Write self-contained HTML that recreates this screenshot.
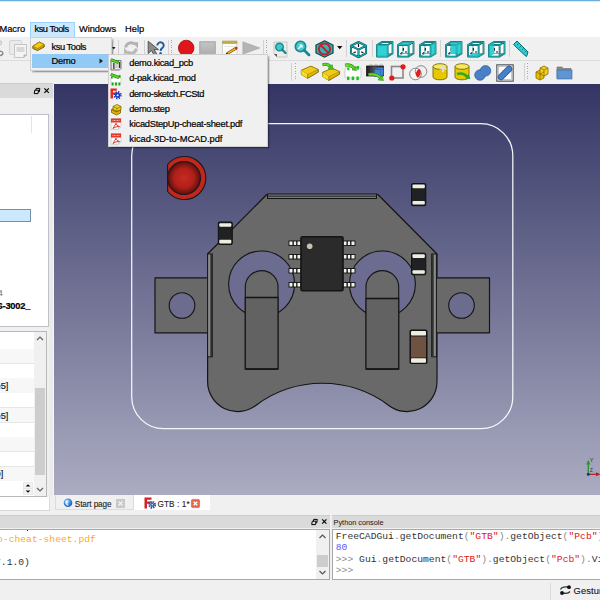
<!DOCTYPE html>
<html><head><meta charset="utf-8">
<style>
*{margin:0;padding:0;box-sizing:border-box}
html,body{width:600px;height:600px;overflow:hidden;background:#f0f0f0;font-family:"Liberation Sans",sans-serif;color:#000}
.a{position:absolute}
.t{position:absolute;white-space:nowrap;-webkit-text-stroke:0.2px currentColor}
svg{overflow:visible}
.m{-webkit-text-stroke:0}
</style></head><body>
<div class="a" style="left:0px;top:0px;width:600px;height:37px;background:#fff;"></div>
<div class="a" style="left:0px;top:0px;width:600px;height:1px;background:#6aafe0;"></div>
<div class="a" style="left:0px;top:1px;width:600px;height:1px;background:#dbeaf6;"></div>
<div class="a" style="left:29.5px;top:22px;width:45px;height:15px;background:#cce8ff;border:1px solid #99d1ff;border-bottom:none"></div>
<div class="t" style="left:-0.5px;top:25.45px;font-size:9.3px;line-height:9.3px;color:#000;letter-spacing:-0.05px;font-weight:normal;font-family:'Liberation Sans',sans-serif;">Macro</div>
<div class="t" style="left:34.5px;top:25.45px;font-size:9.3px;line-height:9.3px;color:#000;letter-spacing:-0.5px;font-weight:normal;font-family:'Liberation Sans',sans-serif;">ksu Tools</div>
<div class="t" style="left:79px;top:25.45px;font-size:9.3px;line-height:9.3px;color:#000;letter-spacing:-0.1px;font-weight:normal;font-family:'Liberation Sans',sans-serif;">Windows</div>
<div class="t" style="left:125px;top:25.45px;font-size:9.3px;line-height:9.3px;color:#000;letter-spacing:0px;font-weight:normal;font-family:'Liberation Sans',sans-serif;">Help</div>
<div class="a" style="left:0px;top:60px;width:600px;height:1px;background:#dcdcdc;"></div>
<div class="a" style="left:117.5px;top:40px;width:1px;height:17px;background:#d2d2d2;"></div>
<div class="a" style="left:143.5px;top:40px;width:1px;height:17px;background:#d2d2d2;"></div>
<div class="a" style="left:167.5px;top:40px;width:1px;height:17px;background:#d2d2d2;"></div>
<div class="a" style="left:262.5px;top:40px;width:1px;height:17px;background:#d2d2d2;"></div>
<div class="a" style="left:346px;top:40px;width:1px;height:17px;background:#d2d2d2;"></div>
<div class="a" style="left:372px;top:40px;width:1px;height:17px;background:#d2d2d2;"></div>
<div class="a" style="left:440px;top:40px;width:1px;height:17px;background:#d2d2d2;"></div>
<div class="a" style="left:509px;top:40px;width:1px;height:17px;background:#d2d2d2;"></div>
<div class="a" style="left:171px;top:40px;width:1px;height:17px;background:repeating-linear-gradient(#a8a8a8 0 1px,transparent 1px 2.5px)"></div>
<div class="a" style="left:266px;top:40px;width:1px;height:17px;background:repeating-linear-gradient(#a8a8a8 0 1px,transparent 1px 2.5px)"></div>
<div class="a" style="left:291.3px;top:63px;width:1px;height:18px;background:#d2d2d2;"></div>
<div class="a" style="left:295px;top:63px;width:1px;height:18px;background:repeating-linear-gradient(#a8a8a8 0 1px,transparent 1px 2.5px)"></div>
<div class="a" style="left:524px;top:63px;width:1px;height:18px;background:#d2d2d2;"></div>
<div class="a" style="left:527px;top:63px;width:1px;height:18px;background:repeating-linear-gradient(#a8a8a8 0 1px,transparent 1px 2.5px)"></div>
<svg class="a" style="left:350px;top:40.5px" width="17" height="17" viewBox="0 0 17 17"><path d="M8.5 1L16 4.8V12.4L8.5 16.2L1 12.4V4.8Z" fill="#fff"/><path d="M8.5 2.5V6 M3.5 12L5.8 10.8 M13.5 12L11.2 10.8" stroke="#111" stroke-width="1.2"/><g fill="none" stroke-linejoin="round"><path d="M8.5 1L16 4.8V12.4L8.5 16.2L1 12.4V4.8Z M1 4.8L8.5 8.6L16 4.8 M8.5 8.6V16.2" stroke="#0d6569" stroke-width="2.1"/><path d="M8.5 1L16 4.8V12.4L8.5 16.2L1 12.4V4.8Z M1 4.8L8.5 8.6L16 4.8 M8.5 8.6V16.2" stroke="#1fa9ad" stroke-width="1"/></g></svg>
<svg class="a" style="left:375.5px;top:40.6px" width="18" height="17" viewBox="0 0 18 17"><path d="M1.0,4.0L5.9,1.0L16.5,1.0L16.5,12.6L11.6,15.6L1.0,15.6Z" fill="#fff"/><path d="M5.9,1.0L5.9,12.6L16.5,12.6 M1.0,15.6L5.9,12.6" fill="none" stroke="#1fa9ad" stroke-width="1" opacity="0.8"/><path d="M6.3 7V9.8 M3.4 12.8L5.3 11.5 M8 11H10" stroke="#111" stroke-width="1.1"/><polygon points="1.0,4.0 11.6,4.0 11.6,15.6 1.0,15.6" fill="#2fd3d6"/><path d="M1.0,4.0L5.9,1.0L16.5,1.0L16.5,12.6L11.6,15.6L1.0,15.6Z M1.0,4.0L11.6,4.0L11.6,15.6 M11.6,4.0L16.5,1.0" fill="none" stroke="#0d6569" stroke-width="1.8" stroke-linejoin="round"/><path d="M1.0,4.0L5.9,1.0L16.5,1.0L16.5,12.6L11.6,15.6L1.0,15.6Z M1.0,4.0L11.6,4.0L11.6,15.6 M11.6,4.0L16.5,1.0" fill="none" stroke="#1fa9ad" stroke-width="0.9" stroke-linejoin="round"/><polygon points="1.0,4.0 11.6,4.0 11.6,15.6 1.0,15.6" fill="#2fd3d6" opacity="0.55"/></svg>
<svg class="a" style="left:397px;top:40.6px" width="18" height="17" viewBox="0 0 18 17"><path d="M1.0,4.0L5.9,1.0L16.5,1.0L16.5,12.6L11.6,15.6L1.0,15.6Z" fill="#fff"/><path d="M5.9,1.0L5.9,12.6L16.5,12.6 M1.0,15.6L5.9,12.6" fill="none" stroke="#1fa9ad" stroke-width="1" opacity="0.8"/><path d="M6.3 7V9.8 M3.4 12.8L5.3 11.5 M8 11H10" stroke="#111" stroke-width="1.1"/><polygon points="1.0,4.0 5.9,1.0 16.5,1.0 11.6,4.0" fill="#2fd3d6"/><path d="M1.0,4.0L5.9,1.0L16.5,1.0L16.5,12.6L11.6,15.6L1.0,15.6Z M1.0,4.0L11.6,4.0L11.6,15.6 M11.6,4.0L16.5,1.0" fill="none" stroke="#0d6569" stroke-width="1.8" stroke-linejoin="round"/><path d="M1.0,4.0L5.9,1.0L16.5,1.0L16.5,12.6L11.6,15.6L1.0,15.6Z M1.0,4.0L11.6,4.0L11.6,15.6 M11.6,4.0L16.5,1.0" fill="none" stroke="#1fa9ad" stroke-width="0.9" stroke-linejoin="round"/><polygon points="1.0,4.0 5.9,1.0 16.5,1.0 11.6,4.0" fill="#2fd3d6" opacity="0.55"/></svg>
<svg class="a" style="left:419.2px;top:40.6px" width="18" height="17" viewBox="0 0 18 17"><path d="M1.0,4.0L5.9,1.0L16.5,1.0L16.5,12.6L11.6,15.6L1.0,15.6Z" fill="#fff"/><path d="M5.9,1.0L5.9,12.6L16.5,12.6 M1.0,15.6L5.9,12.6" fill="none" stroke="#1fa9ad" stroke-width="1" opacity="0.8"/><path d="M6.3 7V9.8 M3.4 12.8L5.3 11.5 M8 11H10" stroke="#111" stroke-width="1.1"/><polygon points="11.6,4.0 16.5,1.0 16.5,12.6 11.6,15.6" fill="#2fd3d6"/><path d="M1.0,4.0L5.9,1.0L16.5,1.0L16.5,12.6L11.6,15.6L1.0,15.6Z M1.0,4.0L11.6,4.0L11.6,15.6 M11.6,4.0L16.5,1.0" fill="none" stroke="#0d6569" stroke-width="1.8" stroke-linejoin="round"/><path d="M1.0,4.0L5.9,1.0L16.5,1.0L16.5,12.6L11.6,15.6L1.0,15.6Z M1.0,4.0L11.6,4.0L11.6,15.6 M11.6,4.0L16.5,1.0" fill="none" stroke="#1fa9ad" stroke-width="0.9" stroke-linejoin="round"/><polygon points="11.6,4.0 16.5,1.0 16.5,12.6 11.6,15.6" fill="#2fd3d6" opacity="0.55"/></svg>
<svg class="a" style="left:445px;top:40.6px" width="18" height="17" viewBox="0 0 18 17"><path d="M1.0,4.0L5.9,1.0L16.5,1.0L16.5,12.6L11.6,15.6L1.0,15.6Z" fill="#fff"/><path d="M5.9,1.0L5.9,12.6L16.5,12.6 M1.0,15.6L5.9,12.6" fill="none" stroke="#1fa9ad" stroke-width="1" opacity="0.8"/><path d="M6.3 7V9.8 M3.4 12.8L5.3 11.5 M8 11H10" stroke="#111" stroke-width="1.1"/><polygon points="5.9,1.0 16.5,1.0 16.5,12.6 5.9,12.6" fill="#2fd3d6"/><path d="M1.0,4.0L5.9,1.0L16.5,1.0L16.5,12.6L11.6,15.6L1.0,15.6Z M1.0,4.0L11.6,4.0L11.6,15.6 M11.6,4.0L16.5,1.0" fill="none" stroke="#0d6569" stroke-width="1.8" stroke-linejoin="round"/><path d="M1.0,4.0L5.9,1.0L16.5,1.0L16.5,12.6L11.6,15.6L1.0,15.6Z M1.0,4.0L11.6,4.0L11.6,15.6 M11.6,4.0L16.5,1.0" fill="none" stroke="#1fa9ad" stroke-width="0.9" stroke-linejoin="round"/><polygon points="5.9,1.0 16.5,1.0 16.5,12.6 5.9,12.6" fill="#2fd3d6" opacity="0.55"/></svg>
<svg class="a" style="left:466.5px;top:40.6px" width="18" height="17" viewBox="0 0 18 17"><path d="M1.0,4.0L5.9,1.0L16.5,1.0L16.5,12.6L11.6,15.6L1.0,15.6Z" fill="#fff"/><path d="M5.9,1.0L5.9,12.6L16.5,12.6 M1.0,15.6L5.9,12.6" fill="none" stroke="#1fa9ad" stroke-width="1" opacity="0.8"/><path d="M6.3 7V9.8 M3.4 12.8L5.3 11.5 M8 11H10" stroke="#111" stroke-width="1.1"/><polygon points="1.0,15.6 5.9,12.6 16.5,12.6 11.6,15.6" fill="#2fd3d6"/><path d="M1.0,4.0L5.9,1.0L16.5,1.0L16.5,12.6L11.6,15.6L1.0,15.6Z M1.0,4.0L11.6,4.0L11.6,15.6 M11.6,4.0L16.5,1.0" fill="none" stroke="#0d6569" stroke-width="1.8" stroke-linejoin="round"/><path d="M1.0,4.0L5.9,1.0L16.5,1.0L16.5,12.6L11.6,15.6L1.0,15.6Z M1.0,4.0L11.6,4.0L11.6,15.6 M11.6,4.0L16.5,1.0" fill="none" stroke="#1fa9ad" stroke-width="0.9" stroke-linejoin="round"/><polygon points="1.0,15.6 5.9,12.6 16.5,12.6 11.6,15.6" fill="#2fd3d6" opacity="0.55"/></svg>
<svg class="a" style="left:488px;top:40.6px" width="18" height="17" viewBox="0 0 18 17"><path d="M1.0,4.0L5.9,1.0L16.5,1.0L16.5,12.6L11.6,15.6L1.0,15.6Z" fill="#fff"/><path d="M5.9,1.0L5.9,12.6L16.5,12.6 M1.0,15.6L5.9,12.6" fill="none" stroke="#1fa9ad" stroke-width="1" opacity="0.8"/><path d="M6.3 7V9.8 M3.4 12.8L5.3 11.5 M8 11H10" stroke="#111" stroke-width="1.1"/><polygon points="1.0,4.0 5.9,1.0 5.9,12.6 1.0,15.6" fill="#2fd3d6"/><path d="M1.0,4.0L5.9,1.0L16.5,1.0L16.5,12.6L11.6,15.6L1.0,15.6Z M1.0,4.0L11.6,4.0L11.6,15.6 M11.6,4.0L16.5,1.0" fill="none" stroke="#0d6569" stroke-width="1.8" stroke-linejoin="round"/><path d="M1.0,4.0L5.9,1.0L16.5,1.0L16.5,12.6L11.6,15.6L1.0,15.6Z M1.0,4.0L11.6,4.0L11.6,15.6 M11.6,4.0L16.5,1.0" fill="none" stroke="#1fa9ad" stroke-width="0.9" stroke-linejoin="round"/><polygon points="1.0,4.0 5.9,1.0 5.9,12.6 1.0,15.6" fill="#2fd3d6" opacity="0.55"/></svg>
<svg class="a" style="left:512px;top:40px" width="17" height="17" viewBox="0 0 17 17"><path d="M1.5 4.5L5 1L16 12L14.5 16.5L12.5 15Z" fill="#2ccfd2" stroke="#0d6569" stroke-width="1"/><path d="M5 5L6.3 3.7M7.5 7.5L8.8 6.2M10 10L11.3 8.7M12.5 12.5L13.8 11.2" stroke="#0d6569" stroke-width="0.8"/></svg>
<svg class="a" style="left:0px;top:40px" width="8" height="17" viewBox="0 0 8 17"><circle cx="-0.5" cy="2.8" r="2" fill="none" stroke="#c4c4c4" stroke-width="1.2"/><path d="M-1 15.5C1.5 15.8 3.2 14.5 2.8 12.8C2.4 11.2 0.5 11 -1 11.5" fill="none" stroke="#8a8a8a" stroke-width="1.5"/></svg>
<svg class="a" style="left:9px;top:40px" width="19" height="18" viewBox="0 0 19 18"><rect x="0.5" y="0.5" width="12" height="14" rx="1.5" fill="#eaeaea" stroke="#d4d4d4"/><path d="M5.5 4.5H17.5V15L15 17.5H5.5Z" fill="#f4f4f4" stroke="#c4c4c4"/><rect x="7.5" y="7" width="8" height="5" fill="#d8d8d8"/><path d="M15 17.5V15H17.5" fill="#ccc" stroke="#aaa" stroke-width="0.8"/></svg>
<svg class="a" style="left:111.5px;top:47px" width="4" height="4" viewBox="0 0 4 4"><path d="M0 0H3.5L1.75 2.6Z" fill="#222"/></svg>
<svg class="a" style="left:122.5px;top:40.5px" width="16" height="14" viewBox="0 0 16 14"><path d="M2.6 6.5A5.4 5.4 0 0 1 11.6 3.2" fill="none" stroke="#b2b2b2" stroke-width="2.8"/><path d="M9 1.2H15V7.2Z" fill="#b2b2b2"/><path d="M13.4 7.5A5.4 5.4 0 0 1 4.4 10.8" fill="none" stroke="#b8b8b8" stroke-width="2.8"/><path d="M7 12.8H1V6.8Z" fill="#b8b8b8"/></svg>
<svg class="a" style="left:146.5px;top:39.5px" width="19" height="18" viewBox="0 0 19 18"><path d="M1.2 1.2L1.2 13.5L4.5 10.5L7.6 16L10 14.6L7.2 9.6H11.5Z" fill="#8c8c8c" stroke="#4a4a4a" stroke-width="0.9" stroke-linejoin="round"/><path d="M10.3 5.5A3.2 3.2 0 1 1 15.2 8.2C14 9 13.6 9.6 13.6 11" fill="none" stroke="#2a5c9c" stroke-width="2"/><circle cx="13.6" cy="13.2" r="1.2" fill="#2a5c9c"/></svg>
<svg class="a" style="left:176.5px;top:39.5px" width="19" height="16" viewBox="0 0 19 16"><circle cx="9.2" cy="8" r="8.6" fill="#fff" opacity="0.9"/><circle cx="9.2" cy="8" r="7.8" fill="#e0161a" stroke="#a00c10" stroke-width="0.8"/></svg>
<svg class="a" style="left:198.5px;top:40.5px" width="17" height="15" viewBox="0 0 17 15"><defs><linearGradient id="gsq" x1="0" y1="0" x2="0" y2="1"><stop offset="0" stop-color="#c4c4c4"/><stop offset="1" stop-color="#acacac"/></linearGradient></defs><rect x="0.8" y="0.8" width="15.4" height="13.6" fill="url(#gsq)" stroke="#a0a0a0"/></svg>
<svg class="a" style="left:220.5px;top:39.5px" width="18" height="17" viewBox="0 0 18 17"><rect x="1.5" y="2" width="14.5" height="14" fill="#fbfbf8" stroke="#c4c4c4" stroke-width="0.7"/><rect x="1.5" y="1" width="14.5" height="2.6" fill="#d4bc50" stroke="#a89030" stroke-width="0.5"/><path d="M2.5 2.2H15" stroke="#8a7420" stroke-width="0.6" stroke-dasharray="0.8 0.7"/><path d="M3.5 6.5H13.5" stroke="#d8d8d8" stroke-width="0.6"/><path d="M6.2 13.6L15 8.2" stroke="#6a4a10" stroke-width="2.8" stroke-linecap="round"/><path d="M6.2 13.6L15 8.2" stroke="#f0b030" stroke-width="1.7"/><circle cx="15.2" cy="8" r="1.2" fill="#e02020"/><path d="M5 14.5L6.6 13.4" stroke="#222" stroke-width="1"/></svg>
<svg class="a" style="left:241.5px;top:40.5px" width="19" height="14" viewBox="0 0 19 14"><path d="M0.8 0.8L18 7L0.8 13.2Z" fill="#b4b4b4" stroke="#a8a8a8" stroke-width="0.6"/></svg>
<svg class="a" style="left:272.5px;top:40.5px" width="15" height="17" viewBox="0 0 15 17"><path d="M1 1H14V16H4L1 13Z" fill="#ececec" stroke="#c8c8c8"/><path d="M1 13L4 16V13Z" fill="#555"/><circle cx="6.5" cy="6" r="3.8" fill="#43c8cc" stroke="#168a90" stroke-width="1.4"/><path d="M9 8.5L12.5 12" stroke="#168a90" stroke-width="2.4" stroke-linecap="round"/></svg>
<svg class="a" style="left:293.5px;top:40px" width="17" height="17" viewBox="0 0 17 17"><circle cx="6.5" cy="6.5" r="5.2" fill="#43c8cc" stroke="#168a90" stroke-width="1.6"/><path d="M10.3 10.3L15 15" stroke="#168a90" stroke-width="2.8" stroke-linecap="round"/><path d="M4 9L8 5M8 5H5.3M8 5V7.7" stroke="#fff" stroke-width="1.2"/></svg>
<svg class="a" style="left:314.5px;top:39.5px" width="19" height="18" viewBox="0 0 19 18"><path d="M9.5 0.8L18 5V13L9.5 17.2L1 13V5Z" fill="#2bb8bd" stroke="#0f3f44" stroke-width="1.2"/><circle cx="9.5" cy="9" r="5.6" fill="none" stroke="#c81e24" stroke-width="2"/><path d="M5.6 5.1L13.4 12.9" stroke="#c81e24" stroke-width="2"/></svg>
<svg class="a" style="left:336.5px;top:46px" width="6" height="4" viewBox="0 0 6 4"><path d="M0 0H5.5L2.75 3.2Z" fill="#111"/></svg>
<svg class="a" style="left:298px;top:60px" width="44" height="22" viewBox="0 0 44 22"><g transform="translate(3.3,6.2)"><path d="M0 4.1L9.6 0L17 3.4V5.9L6.3 12.2L0 8.1Z" fill="#e8b800" stroke="#6a5000" stroke-width="0.8" stroke-linejoin="round"/><path d="M0 4.1L9.6 0L17 3.4L6.3 8.4Z" fill="#f0cc18" stroke="#8a6a00" stroke-width="0.5"/><path d="M0 4.1L6.3 8.4V12.2L0 8.1Z" fill="#f8e020"/><path d="M6.3 8.4V12.2" stroke="#6a5000" stroke-width="0.6"/></g><g transform="translate(24.6,8.3)"><path d="M0 4.1L9.6 0L17 3.4V5.9L6.3 12.2L0 8.1Z" fill="#e8b800" stroke="#6a5000" stroke-width="0.8" stroke-linejoin="round"/><path d="M0 4.1L9.6 0L17 3.4L6.3 8.4Z" fill="#f0cc18" stroke="#8a6a00" stroke-width="0.5"/><path d="M0 4.1L6.3 8.4V12.2L0 8.1Z" fill="#f8e020"/><path d="M6.3 8.4V12.2" stroke="#6a5000" stroke-width="0.6"/></g><path d="M24.5 4.8C27.5 3.8 31 4.2 33 7.5" fill="none" stroke="#2a8a1a" stroke-width="3"/><path d="M24.5 4.8C27.5 3.8 31 4.2 33 7.5" fill="none" stroke="#5ad41e" stroke-width="1.8"/><path d="M30 8.6L35.2 9.6L34.2 4.6Z" fill="#4ac41a" stroke="#2a8a1a" stroke-width="0.5"/></svg>
<svg class="a" style="left:342px;top:60px" width="44" height="22" viewBox="0 0 44 22"><rect x="3" y="7.5" width="16" height="10.5" rx="2" fill="#fff" stroke="#b0b0b0" stroke-width="0.6"/><g fill="#18c818"><rect x="5" y="16.5" width="2.4" height="3.6"/><rect x="9.7" y="16.5" width="2.4" height="3.6"/><rect x="14.4" y="16.5" width="2.4" height="3.6"/><rect x="14.6" y="6" width="2.4" height="3.6"/><rect x="5.2" y="7.8" width="2.2" height="2.4"/></g><path d="M3 5.2C6.5 4.5 10 5.5 12.5 8.8" fill="none" stroke="#2a8a1a" stroke-width="3.2"/><path d="M3 5.2C6.5 4.5 10 5.5 12.5 8.8" fill="none" stroke="#62dc22" stroke-width="2"/><path d="M10 10L14.5 10.6L13.8 6.4Z" fill="#52cc1a" stroke="#2a8a1a" stroke-width="0.5"/><defs><linearGradient id="chipg" x1="0" y1="0" x2="1" y2="0"><stop offset="0" stop-color="#1a1a1a"/><stop offset="0.5" stop-color="#5a5a5a"/><stop offset="1" stop-color="#2a2a2a"/></linearGradient></defs><g fill="#f4f4f4" stroke="#9a9a9a" stroke-width="0.5"><path d="M27 6A1.8 1.8 0 0 1 30.6 6Z"/><path d="M32.2 6A1.8 1.8 0 0 1 35.8 6Z"/><path d="M37.4 6A1.8 1.8 0 0 1 41 6Z"/></g><rect x="24.5" y="6" width="17" height="10" fill="url(#chipg)" stroke="#111" stroke-width="0.7"/><path d="M32.5 9.5L35.5 7.5H41.5V15L38.5 16.5H32.5Z" fill="#3f86d8" stroke="#1f4f90" stroke-width="0.5"/><path d="M35.5 7.5V9.5H41.5M32.5 9.5H38.5V16.5" fill="none" stroke="#1f4f90" stroke-width="0.4"/><path d="M26.5 14.5C30 14 36 14.5 39 18.5" fill="none" stroke="#2a8a1a" stroke-width="3.2"/><path d="M26.5 14.5C30 14 36 14.5 39 18.5" fill="none" stroke="#62dc22" stroke-width="2"/><path d="M36 20L41.5 20.6L40.2 15.6Z" fill="#52cc1a" stroke="#2a8a1a" stroke-width="0.5"/></svg>
<svg class="a" style="left:388.5px;top:63.5px" width="17" height="17" viewBox="0 0 17 17"><rect x="2.5" y="2.5" width="11.5" height="11.5" fill="none" stroke="#8a8a8a" stroke-width="1.6"/><circle cx="14" cy="2.8" r="2.6" fill="#e01a1a"/><circle cx="2.8" cy="14" r="2.6" fill="#e01a1a"/></svg>
<svg class="a" style="left:408.5px;top:64.5px" width="19" height="16" viewBox="0 0 19 16"><circle cx="6.5" cy="9" r="5.8" fill="#f8f8f8" stroke="#7a7a7a" stroke-width="0.9"/><circle cx="12" cy="6.5" r="5.8" fill="none" stroke="#7a7a7a" stroke-width="0.9"/><path d="M10.5 3.7A5.8 5.8 0 0 1 8.2 12.8A5.8 5.8 0 0 1 10.5 3.7Z" fill="#e02020"/></svg>
<svg class="a" style="left:432px;top:63px" width="17" height="18" viewBox="0 0 17 18"><path d="M1 3.5V14A7 2.8 0 0 0 15 14V3.5Z" fill="#e8c800" stroke="#7a6a00" stroke-width="0.9"/><ellipse cx="8" cy="3.5" rx="7" ry="2.8" fill="#f8e860" stroke="#7a6a00" stroke-width="0.9"/><path d="M11 2V9M7.5 5.5H14.5" stroke="#dcdcdc" stroke-width="2"/></svg>
<svg class="a" style="left:454px;top:63px" width="17" height="18" viewBox="0 0 17 18"><path d="M1 3.5V14A7 2.8 0 0 0 15 14V3.5Z" fill="#e8c800" stroke="#7a6a00" stroke-width="0.9"/><ellipse cx="8" cy="3.5" rx="7" ry="2.8" fill="#f8e860" stroke="#7a6a00" stroke-width="0.9"/><path d="M3 11C7 10 11 11 13.5 14" fill="none" stroke="#2fa82a" stroke-width="2.6"/><path d="M11 15.5L16.5 16L14.5 11Z" fill="#2fa82a"/></svg>
<svg class="a" style="left:473.5px;top:64.5px" width="18" height="16" viewBox="0 0 18 16"><circle cx="6" cy="10" r="5.3" fill="#4a80c8" stroke="#2a5a98" stroke-width="0.7"/><circle cx="11.5" cy="5.8" r="5.3" fill="#4a80c8" stroke="#2a5a98" stroke-width="0.7"/><path d="M6 10L11.5 5.8" stroke="#4a80c8" stroke-width="6"/></svg>
<svg class="a" style="left:495.5px;top:63.5px" width="18" height="18" viewBox="0 0 18 18"><rect x="0.8" y="0.8" width="16.4" height="16.4" fill="#e8e8e8" stroke="#555" stroke-width="1.1"/><rect x="2.5" y="2.5" width="13" height="13" fill="#fff" stroke="#999" stroke-width="0.5"/><path d="M5 13L13 5" stroke="#2a5aa0" stroke-width="6.5" stroke-linecap="round"/><path d="M5 13L13 5" stroke="#4a80c8" stroke-width="4.6" stroke-linecap="round"/></svg>
<svg class="a" style="left:534.5px;top:64px" width="15" height="15" viewBox="0 0 15 15"><path d="M1 8L5 6L9 8V14L5 16L1 14Z" fill="#e6c000" stroke="#8a6a00" stroke-width="0.8"/><path d="M5 4L9 2L13 4V10L9 12L5 10Z" fill="#f2cf1a" stroke="#8a6a00" stroke-width="0.8"/><path d="M1 8L5 10L9 8M5 4L9 6L13 4M9 6V12M5 10V16" fill="none" stroke="#8a6a00" stroke-width="0.7"/></svg>
<svg class="a" style="left:555.5px;top:64.5px" width="17" height="15" viewBox="0 0 17 15"><path d="M1 2H6L7.5 3.5H15V13H1Z" fill="#8a8a8a" stroke="#6a6a6a" stroke-width="0.6"/><rect x="1" y="5" width="15" height="9" fill="#5f95d0" stroke="#3a6aa0" stroke-width="0.6"/></svg>
<div class="a" style="left:0px;top:83px;width:52.5px;height:1px;background:#cdcdcd;"></div>
<div class="a" style="left:0px;top:84px;width:52.5px;height:13.5px;background:#dadada;"></div>
<div class="a" style="left:52.5px;top:83px;width:1.5px;height:15px;background:#f0f0f0;"></div>
<svg class="a" style="left:33px;top:86px" width="18" height="10" viewBox="0 0 18 10"><path d="M1.8 4.2H5.6L5 7.6H1.2Z M2.9 4.2L3.2 2.4H6.8L6.3 5.8H5.4" fill="none" stroke="#000" stroke-width="1"/><path d="M11.4 2.4L15.8 6.8M15.8 2.4L11.4 6.8" stroke="#000" stroke-width="1.15"/></svg>
<div class="a" style="left:0px;top:114px;width:49px;height:212.5px;background:#fff;border:1px solid #c0c0c8;border-left:none"></div>
<div class="a" style="left:31px;top:116px;width:1px;height:17px;background:#e4e4e4;"></div>
<div class="a" style="left:0px;top:209.3px;width:31px;height:12.5px;background:#cce8ff;border:1px solid #7890a4;border-left:none"></div>
<div class="t" style="left:-2px;top:289.17px;font-size:8.5px;line-height:8.5px;color:#8a8a8a;letter-spacing:0px;font-weight:normal;font-family:'Liberation Sans',sans-serif;">4</div>
<div class="t" style="left:-3.5px;top:301.55px;font-size:9.3px;line-height:9.3px;color:#000;letter-spacing:-0.2px;font-weight:bold;font-family:'Liberation Sans',sans-serif;">S-3002_</div>
<div class="a" style="left:0px;top:331px;width:47px;height:166px;background:#fff;"></div>
<div class="a" style="left:0px;top:332px;width:33.5px;height:17px;background:#fff;"></div>
<div class="a" style="left:0px;top:348.5px;width:33.5px;height:1px;background:#e6e6e6;"></div>
<div class="a" style="left:0px;top:349px;width:33.5px;height:14.699999999999989px;background:#f7f7f7;"></div>
<div class="a" style="left:0px;top:363.2px;width:33.5px;height:1px;background:#e6e6e6;"></div>
<div class="a" style="left:0px;top:363.7px;width:33.5px;height:14.699999999999989px;background:#fff;"></div>
<div class="a" style="left:0px;top:377.9px;width:33.5px;height:1px;background:#e6e6e6;"></div>
<div class="a" style="left:0px;top:378.4px;width:33.5px;height:14.700000000000045px;background:#f7f7f7;"></div>
<div class="a" style="left:0px;top:392.6px;width:33.5px;height:1px;background:#e6e6e6;"></div>
<div class="a" style="left:0px;top:393.1px;width:33.5px;height:14.699999999999989px;background:#fff;"></div>
<div class="a" style="left:0px;top:407.3px;width:33.5px;height:1px;background:#e6e6e6;"></div>
<div class="a" style="left:0px;top:407.8px;width:33.5px;height:14.699999999999989px;background:#f7f7f7;"></div>
<div class="a" style="left:0px;top:422.0px;width:33.5px;height:1px;background:#e6e6e6;"></div>
<div class="a" style="left:0px;top:422.5px;width:33.5px;height:14.699999999999989px;background:#fff;"></div>
<div class="a" style="left:0px;top:436.7px;width:33.5px;height:1px;background:#e6e6e6;"></div>
<div class="a" style="left:0px;top:437.2px;width:33.5px;height:14.699999999999989px;background:#f7f7f7;"></div>
<div class="a" style="left:0px;top:451.4px;width:33.5px;height:1px;background:#e6e6e6;"></div>
<div class="a" style="left:0px;top:451.9px;width:33.5px;height:14.700000000000045px;background:#fff;"></div>
<div class="a" style="left:0px;top:466.1px;width:33.5px;height:1px;background:#e6e6e6;"></div>
<div class="a" style="left:0px;top:466.6px;width:33.5px;height:14.699999999999989px;background:#f7f7f7;"></div>
<div class="a" style="left:0px;top:480.8px;width:33.5px;height:1px;background:#e6e6e6;"></div>
<div class="a" style="left:0px;top:481.3px;width:33.5px;height:14.699999999999989px;background:#fff;"></div>
<div class="a" style="left:0px;top:495.5px;width:33.5px;height:1px;background:#e6e6e6;"></div>
<div class="t" style="left:-4.5px;top:382.35px;font-size:9.3px;line-height:9.3px;color:#222;letter-spacing:0px;font-weight:normal;font-family:'Liberation Sans',sans-serif;">e5]</div>
<div class="t" style="left:-4.5px;top:411.55px;font-size:9.3px;line-height:9.3px;color:#222;letter-spacing:0px;font-weight:normal;font-family:'Liberation Sans',sans-serif;">e5]</div>
<div class="t" style="left:-4.5px;top:470.35px;font-size:9.3px;line-height:9.3px;color:#222;letter-spacing:0px;font-weight:normal;font-family:'Liberation Sans',sans-serif;">0]</div>
<svg class="a" style="left:23px;top:481.5px" width="10" height="13" viewBox="0 0 10 13"><rect x="0" y="0" width="10" height="13" fill="#e6e6e6"/><rect x="0.8" y="0.8" width="8.4" height="5.2" fill="#f2f2f2"/><rect x="0.8" y="7" width="8.4" height="5.2" fill="#f2f2f2"/><path d="M2.6 4.6L5 2.2L7.4 4.6Z M2.6 8.4L5 10.8L7.4 8.4Z" fill="#111"/></svg>
<div class="a" style="left:33.5px;top:332px;width:13px;height:164px;background:#f0f0f0;"></div>
<div class="a" style="left:35px;top:388px;width:10px;height:87px;background:#cdcdcd;"></div>
<div class="a" style="left:0px;top:331px;width:47px;height:166px;background:transparent;border:1px solid #b8b8b8;border-left:none"></div>
<div class="a" style="left:0px;top:497px;width:49.5px;height:13.5px;background:#fff;border:1px solid #dadada;border-left:none;border-top:none"></div>
<svg class="a" style="left:35px;top:333px" width="10" height="162" viewBox="0 0 10 162"><path d="M2 7L5 4L8 7" fill="none" stroke="#606060" stroke-width="1.2"/><path d="M2 155L5 158L8 155" fill="none" stroke="#606060" stroke-width="1.2"/></svg>
<div class="a" style="left:49px;top:114px;width:4px;height:382px;background:#ebebeb;"></div>
<div class="a" style="left:53px;top:98px;width:1px;height:397px;background:#f6f6f6;"></div>
<div class="a" style="left:54px;top:495px;width:546px;height:16px;background:#f0f0f0;"></div>
<div class="a" style="left:55px;top:495px;width:79px;height:15px;background:#f0f0f0;border:1px solid #dcdcdc;border-top:none"></div>
<svg class="a" style="left:63px;top:497.8px" width="10" height="10" viewBox="0 0 10 10"><defs><radialGradient id="gl" cx="0.4" cy="0.35" r="0.7"><stop offset="0" stop-color="#bfe4ff"/><stop offset="0.5" stop-color="#3f8fe0"/><stop offset="1" stop-color="#1a4fa8"/></radialGradient></defs><circle cx="5" cy="4.8" r="4.3" fill="url(#gl)"/><path d="M3 2.5C4.5 2 5.5 3 4.8 4.2C4 5.2 5 6.5 6.2 7.5C4.5 8 2.5 7 2.2 5C2 4 2.4 3 3 2.5Z" fill="#fff" opacity="0.7"/></svg>
<div class="t" style="left:74.8px;top:500.60px;font-size:8.2px;line-height:8.2px;color:#222;letter-spacing:-0.12px;font-weight:normal;font-family:'Liberation Sans',sans-serif;-webkit-text-stroke:0.1px #222">Start page</div>
<svg class="a" style="left:115.5px;top:499px" width="9" height="9" viewBox="0 0 9 9"><rect x="0" y="0" width="9" height="9" fill="#c8c8c8"/><path d="M2.5 2.5L6.5 6.5M6.5 2.5L2.5 6.5" stroke="#f4f4f4" stroke-width="1.2"/></svg>
<div class="a" style="left:134px;top:495px;width:76px;height:15px;background:#fff;"></div>
<svg class="a" style="left:143.5px;top:497px" width="13" height="12" viewBox="0 0 13 12"><path d="M0.5 0.5H7.5V2.8H3V4.6H6.5V6.8H3V11.5H0.5Z" fill="#d4202a"/><g transform="translate(8.2,7.8)"><circle r="2.8" fill="none" stroke="#1f4fa0" stroke-width="2.2" stroke-dasharray="1.4 0.8"/><circle r="1.9" fill="#1f4fa0"/><circle r="0.8" fill="#fff"/></g></svg>
<div class="t" style="left:157.5px;top:500.60px;font-size:8.2px;line-height:8.2px;color:#222;letter-spacing:0.1px;font-weight:normal;font-family:'Liberation Sans',sans-serif;-webkit-text-stroke:0.1px #222">GTB : 1*</div>
<svg class="a" style="left:190.8px;top:498.8px" width="9" height="9" viewBox="0 0 9 9"><rect x="0.4" y="0.4" width="8.2" height="8.2" rx="1.3" fill="#e46a48" stroke="#d05a38" stroke-width="0.6"/><path d="M2.7 2.7L6.3 6.3M6.3 2.7L2.7 6.3" stroke="#fff" stroke-width="1.3"/></svg>
<div class="a" style="left:0px;top:511px;width:600px;height:4px;background:#f0f0f0;"></div>
<div class="a" style="left:0px;top:514.7px;width:329.5px;height:13px;background:#dadada;border-top:1px solid #cdcdcd"></div>
<svg class="a" style="left:310px;top:517px" width="18" height="10" viewBox="0 0 18 10"><path d="M2.3 4.2H6.1L5.5 7.6H1.7Z M3.4 4.2L3.7 2.4H7.3L6.8 5.8H5.9" fill="none" stroke="#000" stroke-width="1"/><path d="M12.2 2.4L16.4 6.6M16.4 2.4L12.2 6.6" stroke="#000" stroke-width="1.15"/></svg>
<div class="a" style="left:332px;top:514.7px;width:268px;height:13px;background:#dadada;border-top:1px solid #cdcdcd"></div>
<div class="t" style="left:333.6px;top:519.11px;font-size:7.3px;line-height:7.3px;color:#222;letter-spacing:0px;font-weight:normal;font-family:'Liberation Sans',sans-serif;-webkit-text-stroke:0.05px #222">Python console</div>
<div class="a" style="left:0px;top:529px;width:329.5px;height:51px;background:#fff;border:1px solid #a8a8a8;border-left:none"></div>
<div class="a" style="left:27px;top:529.5px;width:1px;height:1.5px;background:#333;"></div>
<div class="t m" style="left:-3px;top:534.56px;font-size:9.7px;line-height:9.7px;color:#ffaa22;letter-spacing:0px;font-weight:normal;font-family:'Liberation Mono',monospace;">o-cheat-sheet.pdf</div>
<div class="t m" style="left:-5px;top:557.56px;font-size:9.7px;line-height:9.7px;color:#333;letter-spacing:0px;font-weight:normal;font-family:'Liberation Mono',monospace;">7.1.0)</div>
<div class="a" style="left:316px;top:530px;width:12.5px;height:49px;background:#f0f0f0;"></div>
<div class="a" style="left:317px;top:555px;width:10.5px;height:12px;background:#cdcdcd;"></div>
<svg class="a" style="left:317px;top:531px" width="11" height="47" viewBox="0 0 11 47"><path d="M2.5 7L5.5 4L8.5 7" fill="none" stroke="#555" stroke-width="1.2"/><path d="M2.5 40L5.5 43L8.5 40" fill="none" stroke="#555" stroke-width="1.2"/></svg>
<div class="a" style="left:332px;top:529px;width:268px;height:51px;background:#fff;border:1px solid #a8a8a8;border-right:none"></div>
<div class="t m" style="left:335.8px;top:531.56px;font-size:9.7px;line-height:9.7px;color:#333;letter-spacing:0px;font-weight:normal;font-family:'Liberation Mono',monospace;"><span style="color:#333">FreeCADGui</span><span style="color:#8a8a8a">.</span><span style="color:#333">getDocument</span><span style="color:#8a8a8a">(</span><span style="color:#e01818">"GTB"</span><span style="color:#8a8a8a">)</span><span style="color:#8a8a8a">.</span><span style="color:#333">getObject</span><span style="color:#8a8a8a">(</span><span style="color:#e01818">"Pcb"</span><span style="color:#8a8a8a">)</span></div>
<div class="t m" style="left:335.8px;top:543.06px;font-size:9.7px;line-height:9.7px;color:#333;letter-spacing:0px;font-weight:normal;font-family:'Liberation Mono',monospace;"><span style="color:#5a5aff">80</span></div>
<div class="t m" style="left:335.8px;top:554.56px;font-size:9.7px;line-height:9.7px;color:#333;letter-spacing:0px;font-weight:normal;font-family:'Liberation Mono',monospace;"><span style="color:#8a8a8a">&gt;&gt;&gt; </span><span style="color:#333">Gui</span><span style="color:#8a8a8a">.</span><span style="color:#333">getDocument</span><span style="color:#8a8a8a">(</span><span style="color:#e01818">"GTB"</span><span style="color:#8a8a8a">)</span><span style="color:#8a8a8a">.</span><span style="color:#333">getObject</span><span style="color:#8a8a8a">(</span><span style="color:#e01818">"Pcb"</span><span style="color:#8a8a8a">)</span><span style="color:#8a8a8a">.</span><span style="color:#333">Vi</span></div>
<div class="t m" style="left:335.8px;top:566.06px;font-size:9.7px;line-height:9.7px;color:#333;letter-spacing:0px;font-weight:normal;font-family:'Liberation Mono',monospace;"><span style="color:#8a8a8a">&gt;&gt;&gt;</span></div>
<div class="a" style="left:0px;top:580px;width:600px;height:20px;background:#f0f0f0;"></div>
<div class="a" style="left:550px;top:583px;width:1px;height:17px;background:#dadada;"></div>
<svg class="a" style="left:559px;top:584px" width="13" height="13" viewBox="0 0 13 13"><path d="M1.5 5.5C2.5 3 6 2.5 9.5 3" fill="none" stroke="#333" stroke-width="1.3"/><path d="M4 9C6 9.5 9.5 9.5 11 7.5" fill="none" stroke="#333" stroke-width="1.3"/><circle cx="10" cy="3.2" r="1.9" fill="#111"/><circle cx="3" cy="9" r="1.9" fill="#111"/></svg>
<div class="t" style="left:573.5px;top:586.55px;font-size:9.3px;line-height:9.3px;color:#111;letter-spacing:0.15px;font-weight:normal;font-family:'Liberation Sans',sans-serif;-webkit-text-stroke:0.1px #111">Gesture</div>
<!-- 3D view -->
<svg class="a" style="left:54px;top:84px" width="546" height="411" viewBox="54 84 546 411">
<defs>
<linearGradient id="bg" x1="0" y1="0" x2="0" y2="1"><stop offset="0" stop-color="#343564"/><stop offset="1" stop-color="#abacc2"/></linearGradient>
<radialGradient id="led" cx="0.5" cy="0.5" r="0.5"><stop offset="0" stop-color="#c42a22"/><stop offset="0.6" stop-color="#b02018"/><stop offset="1" stop-color="#5a1010"/></radialGradient>
</defs>
<rect x="54" y="84" width="546" height="411" fill="url(#bg)"/>

<!-- outline -->
<rect x="131.7" y="123.7" width="381.1" height="305" rx="32" ry="32" fill="none" stroke="#f6f6fa" stroke-width="1.25"/>
<!-- LED -->
<path d="M167.6 164.5 A21.5 21.5 0 1 1 167.6 191.5 Z" fill="#c4261c" stroke="#1a1a1a" stroke-width="1.1"/>
<circle cx="184" cy="178" r="16.5" fill="url(#led)" stroke="#1a1a1a" stroke-width="1.1"/>
<!-- PCB -->
<path d="M266.7 194.5 L377.9 194.5 L437 254 L437 277.8 L489.5 277.8 L489.5 332.8 L437 332.8 L437 381.5 A30 30 0 0 1 388.8 405.4 A111 111 0 0 0 255.8 405.4 A30 30 0 0 1 207.6 381.5 L207.6 332.8 L155 332.8 L155 277.8 L207.6 277.8 L207.6 254 Z" fill="#696969" stroke="#151515" stroke-width="1.2" stroke-linejoin="round"/>
<circle cx="182" cy="305.5" r="12.8" fill="#6c6c8e" stroke="#151515" stroke-width="1.1"/>
<circle cx="461.5" cy="305.5" r="12.8" fill="#6c6c8e" stroke="#151515" stroke-width="1.1"/>
<!-- big cutouts -->
<circle cx="261.6" cy="284" r="33" fill="#6c6c90" stroke="#151515" stroke-width="1.1"/>
<circle cx="382.4" cy="284" r="33" fill="#6c6c90" stroke="#151515" stroke-width="1.1"/>
<!-- levers -->
<path d="M245.3 369 L245.3 287 A16.3 16.3 0 0 1 278 287 L278 369 Z" fill="#696969" stroke="#151515" stroke-width="1.1"/>
<rect x="245.3" y="297.5" width="32.7" height="71.5" fill="#626262" stroke="#151515" stroke-width="1.1"/>
<line x1="245.3" y1="297.5" x2="278" y2="297.5" stroke="#151515" stroke-width="1.6"/>
<line x1="245.3" y1="369" x2="278" y2="369" stroke="#151515" stroke-width="1.6"/>
<path d="M366 369 L366 287 A16.3 16.3 0 0 1 398.7 287 L398.7 369 Z" fill="#696969" stroke="#151515" stroke-width="1.1"/>
<rect x="366" y="298.5" width="32.7" height="70.5" fill="#626262" stroke="#151515" stroke-width="1.1"/>
<line x1="366" y1="298.5" x2="398.7" y2="298.5" stroke="#151515" stroke-width="1.6"/>
<line x1="366" y1="369" x2="398.7" y2="369" stroke="#151515" stroke-width="1.6"/>
<!-- holder strips -->
<rect x="207.6" y="254" width="4.7" height="102.8" fill="#8a8a8a" stroke="#151515" stroke-width="1"/>
<line x1="211.2" y1="254" x2="211.2" y2="356.8" stroke="#303030" stroke-width="1.8"/>
<rect x="431.7" y="254" width="4.7" height="102.8" fill="#8a8a8a" stroke="#151515" stroke-width="1"/>
<line x1="432.8" y1="254" x2="432.8" y2="356.8" stroke="#303030" stroke-width="1.8"/>
<rect x="267.5" y="194" width="109" height="4.5" fill="#7a7a7a" stroke="#151515" stroke-width="1"/>
<line x1="267.5" y1="196.2" x2="376.5" y2="196.2" stroke="#1a1a1a" stroke-width="0.9"/>
<!-- IC -->
<g fill="#f2f2ea" stroke="#111" stroke-width="0.9">
<rect x="289" y="241" width="4" height="4.5"/><rect x="293.3" y="241" width="3.5" height="4.5"/><rect x="297" y="241" width="4" height="4.5"/>
<rect x="289" y="254.5" width="4" height="4.5"/><rect x="293.3" y="254.5" width="3.5" height="4.5"/><rect x="297" y="254.5" width="4" height="4.5"/>
<rect x="289" y="268.5" width="4" height="4.5"/><rect x="293.3" y="268.5" width="3.5" height="4.5"/><rect x="297" y="268.5" width="4" height="4.5"/>
<rect x="289" y="282.5" width="4" height="4.5"/><rect x="293.3" y="282.5" width="3.5" height="4.5"/><rect x="297" y="282.5" width="4" height="4.5"/>
<rect x="343" y="241" width="4" height="4.5"/><rect x="347.3" y="241" width="3.5" height="4.5"/><rect x="351" y="241" width="4" height="4.5"/>
<rect x="343" y="254.5" width="4" height="4.5"/><rect x="347.3" y="254.5" width="3.5" height="4.5"/><rect x="351" y="254.5" width="4" height="4.5"/>
<rect x="343" y="268.5" width="4" height="4.5"/><rect x="347.3" y="268.5" width="3.5" height="4.5"/><rect x="351" y="268.5" width="4" height="4.5"/>
<rect x="343" y="282.5" width="4" height="4.5"/><rect x="347.3" y="282.5" width="3.5" height="4.5"/><rect x="351" y="282.5" width="4" height="4.5"/>
</g>
<rect x="301" y="236.8" width="42" height="54" rx="1.5" fill="#2b2b2b" stroke="#141414" stroke-width="1.6"/>
<circle cx="309.7" cy="246.3" r="2.8" fill="#c8c0b0"/>
<!-- SMDs -->
<g>
<rect x="218.3" y="222" width="14" height="22.5" rx="1.2" fill="#1f2123" stroke="#111" stroke-width="1"/>
<rect x="219.3" y="223.2" width="12" height="3.6" rx="1" fill="#eeeee0"/>
<rect x="219.3" y="239.8" width="12" height="3.6" rx="1" fill="#eeeee0"/>
<rect x="411.5" y="183.5" width="14.3" height="22.2" rx="1.2" fill="#1f2123" stroke="#111" stroke-width="1"/>
<rect x="412.5" y="184.6" width="12.3" height="3.6" rx="1" fill="#eeeee0"/>
<rect x="412.5" y="201" width="12.3" height="3.6" rx="1" fill="#eeeee0"/>
<rect x="411.5" y="253.2" width="14.3" height="21.6" rx="1.2" fill="#1f2123" stroke="#111" stroke-width="1"/>
<rect x="412.5" y="254.3" width="12.3" height="3.6" rx="1" fill="#eeeee0"/>
<rect x="412.5" y="270.2" width="12.3" height="3.6" rx="1" fill="#eeeee0"/>
<rect x="410" y="330" width="17" height="33.5" rx="1.2" fill="#1a1a1a" stroke="#111" stroke-width="1"/>
<rect x="411" y="331" width="15" height="4.6" rx="1" fill="#eeeee0"/>
<rect x="411" y="336.5" width="15" height="21" fill="#6e5242"/>
<rect x="411" y="358.2" width="15" height="4.6" rx="1" fill="#eeeee0"/>
</g>
<!-- axis -->
<line x1="588.3" y1="474" x2="588.3" y2="463" stroke="#1e9a2a" stroke-width="1.3"/>
<path d="M586.3 464.5 L588.3 459.8 L590.3 464.5 Z" fill="#1e9a2a"/>
<line x1="588.3" y1="474.3" x2="597" y2="474.3" stroke="#b02222" stroke-width="1.2"/>
<path d="M596 472.3 L600.5 474.3 L596 476.3 Z" fill="#b02222"/>
<circle cx="588.3" cy="474.3" r="1.5" fill="#1a2aa0"/>
<text x="589.8" y="461.5" font-size="5.5" fill="#2a2a3a" font-family="Liberation Sans">Y</text>
<text x="590" y="472.3" font-size="4.5" fill="#2a2a3a" font-family="Liberation Sans">Z</text>
</svg>
<div class="a" style="left:30px;top:37px;width:81.5px;height:33.5px;background:#f0f0f0;border:1px solid #cfcfcf;box-shadow:1.5px 1.5px 1.5px rgba(0,0,0,0.35)"></div>
<svg class="a" style="left:30px;top:38px" width="20" height="16" viewBox="0 0 20 16"><path d="M2.8 8.3L9.3 4L14.2 6.6L14.2 9L7.4 12.6L2.8 10.4Z" fill="#d8a800" stroke="#5a4400" stroke-width="0.8" stroke-linejoin="round"/><path d="M2.8 8.3L9.3 4L14.2 6.6L7.6 10.6Z" fill="#f2cc10" stroke="#7a6000" stroke-width="0.5"/></svg>
<div class="t" style="left:51.5px;top:42.55px;font-size:9.3px;line-height:9.3px;color:#000;letter-spacing:-0.45px;font-weight:normal;font-family:'Liberation Sans',sans-serif;">ksu Tools</div>
<div class="a" style="left:32px;top:54px;width:77px;height:14.3px;background:#91c9f7;"></div>
<div class="t" style="left:51.5px;top:57.35px;font-size:9.3px;line-height:9.3px;color:#000;letter-spacing:-0.2px;font-weight:normal;font-family:'Liberation Sans',sans-serif;">Demo</div>
<svg class="a" style="left:99px;top:58px" width="5" height="6" viewBox="0 0 5 6"><path d="M0.5 0.5L4 3L0.5 5.5Z" fill="#222"/></svg>
<div class="a" style="left:107.5px;top:53.5px;width:160.5px;height:93.5px;background:#f0f0f0;border:1px solid #cfcfcf;box-shadow:1.5px 1.5px 1.5px rgba(0,0,0,0.35)"></div>
<div class="t" style="left:129.3px;top:59.35px;font-size:9.3px;line-height:9.3px;color:#000;letter-spacing:-0.3px;font-weight:normal;font-family:'Liberation Sans',sans-serif;">demo.kicad_pcb</div>
<div class="t" style="left:129.3px;top:74.45px;font-size:9.3px;line-height:9.3px;color:#000;letter-spacing:-0.3px;font-weight:normal;font-family:'Liberation Sans',sans-serif;">d-pak.kicad_mod</div>
<div class="t" style="left:129.3px;top:89.55px;font-size:9.3px;line-height:9.3px;color:#000;letter-spacing:-0.44px;font-weight:normal;font-family:'Liberation Sans',sans-serif;">demo-sketch.FCStd</div>
<div class="t" style="left:129.3px;top:104.65px;font-size:9.3px;line-height:9.3px;color:#000;letter-spacing:-0.36px;font-weight:normal;font-family:'Liberation Sans',sans-serif;">demo.step</div>
<div class="t" style="left:129.3px;top:119.75px;font-size:9.3px;line-height:9.3px;color:#000;letter-spacing:-0.26px;font-weight:normal;font-family:'Liberation Sans',sans-serif;">kicadStepUp-cheat-sheet.pdf</div>
<div class="t" style="left:129.3px;top:134.85px;font-size:9.3px;line-height:9.3px;color:#000;letter-spacing:-0.02px;font-weight:normal;font-family:'Liberation Sans',sans-serif;">kicad-3D-to-MCAD.pdf</div>
<svg class="a" style="left:110.3px;top:57.5px" width="12" height="12" viewBox="0 0 12 12"><path d="M1 2.5H11V10.5L9.5 12H1Z" fill="#e4e4e4" stroke="#6a6a6a" stroke-width="0.9"/><rect x="3" y="5" width="1.6" height="6" fill="#555"/><rect x="9" y="4" width="1.2" height="6" fill="#333"/><path d="M4.5 7H9M4.5 9H9" stroke="#aaa" stroke-width="0.7"/><path d="M0.8 1.6L8.5 4.6" stroke="#1f7a10" stroke-width="3"/><path d="M0.8 1.6L8.5 4.6" stroke="#5ad41e" stroke-width="1.8"/></svg>
<svg class="a" style="left:110.3px;top:72.6px" width="12" height="12" viewBox="0 0 12 12"><rect x="1" y="5" width="10" height="5" fill="#fff" stroke="#bbb" stroke-width="0.5"/><g fill="#12b012"><rect x="1.6" y="9.5" width="2" height="3"/><rect x="5" y="9.5" width="2" height="3"/><rect x="8.4" y="9.5" width="2" height="3"/><rect x="8.6" y="2" width="2" height="2.8"/><rect x="1" y="3.5" width="1.6" height="2"/></g><path d="M0.8 1.4L9 4.6" stroke="#1f7a10" stroke-width="3"/><path d="M0.8 1.4L9 4.6" stroke="#5ad41e" stroke-width="1.8"/></svg>
<svg class="a" style="left:110.3px;top:87.7px" width="12" height="12" viewBox="0 0 12 12"><path d="M0.5 0.5H6.8V2.8H3V4.5H6V6.6H3V10.5H0.5Z" fill="#e8281c"/><g transform="translate(7.6,7.2)"><circle r="3.3" fill="none" stroke="#1a38b8" stroke-width="1.8" stroke-dasharray="1.3 1.3"/><circle r="2.6" fill="#1a38b8"/><circle r="1" fill="#fff"/></g></svg>
<svg class="a" style="left:110.3px;top:102.8px" width="12" height="12" viewBox="0 0 12 12"><path d="M1.5 6.5L5.5 4.5L10.5 7V10L6.5 12L1.5 9.5Z" fill="#d8b400" stroke="#6a5400" stroke-width="0.7" stroke-linejoin="round"/><path d="M1.5 6.5L6.5 9L10.5 7" fill="none" stroke="#6a5400" stroke-width="0.6"/><path d="M3 3.5L7 1.5L11 3.5V6.5L7 8.5L3 6.5Z" fill="#f4d418" stroke="#6a5400" stroke-width="0.7" stroke-linejoin="round"/><path d="M3 3.5L7 5.5L11 3.5M7 5.5V8.5" fill="none" stroke="#6a5400" stroke-width="0.6"/></svg>
<svg class="a" style="left:110.3px;top:117.9px" width="12" height="12" viewBox="0 0 12 12"><path d="M1 0.5H11V9L8.5 11.5H1Z" fill="#f6f6f6" stroke="#c4c4c4" stroke-width="0.6"/><path d="M8.5 11.5V9H11" fill="#ddd" stroke="#bbb" stroke-width="0.5"/><rect x="1" y="0.5" width="10" height="4" fill="#e23a2a"/><path d="M2.5 2.5H9.5" stroke="#fff" stroke-width="0.6" stroke-dasharray="1 0.5"/><path d="M3 10.5C4.5 8 5.8 6 6 5.2C6.2 6.5 7.5 8 9.5 8.5C7.5 8.3 5 9 3 10.5Z" fill="none" stroke="#e23a2a" stroke-width="1"/></svg>
<svg class="a" style="left:110.3px;top:133.0px" width="12" height="12" viewBox="0 0 12 12"><path d="M1 0.5H11V9L8.5 11.5H1Z" fill="#f6f6f6" stroke="#c4c4c4" stroke-width="0.6"/><path d="M8.5 11.5V9H11" fill="#ddd" stroke="#bbb" stroke-width="0.5"/><rect x="1" y="0.5" width="10" height="4" fill="#e23a2a"/><path d="M2.5 2.5H9.5" stroke="#fff" stroke-width="0.6" stroke-dasharray="1 0.5"/><path d="M3 10.5C4.5 8 5.8 6 6 5.2C6.2 6.5 7.5 8 9.5 8.5C7.5 8.3 5 9 3 10.5Z" fill="none" stroke="#e23a2a" stroke-width="1"/></svg>
</body></html>
